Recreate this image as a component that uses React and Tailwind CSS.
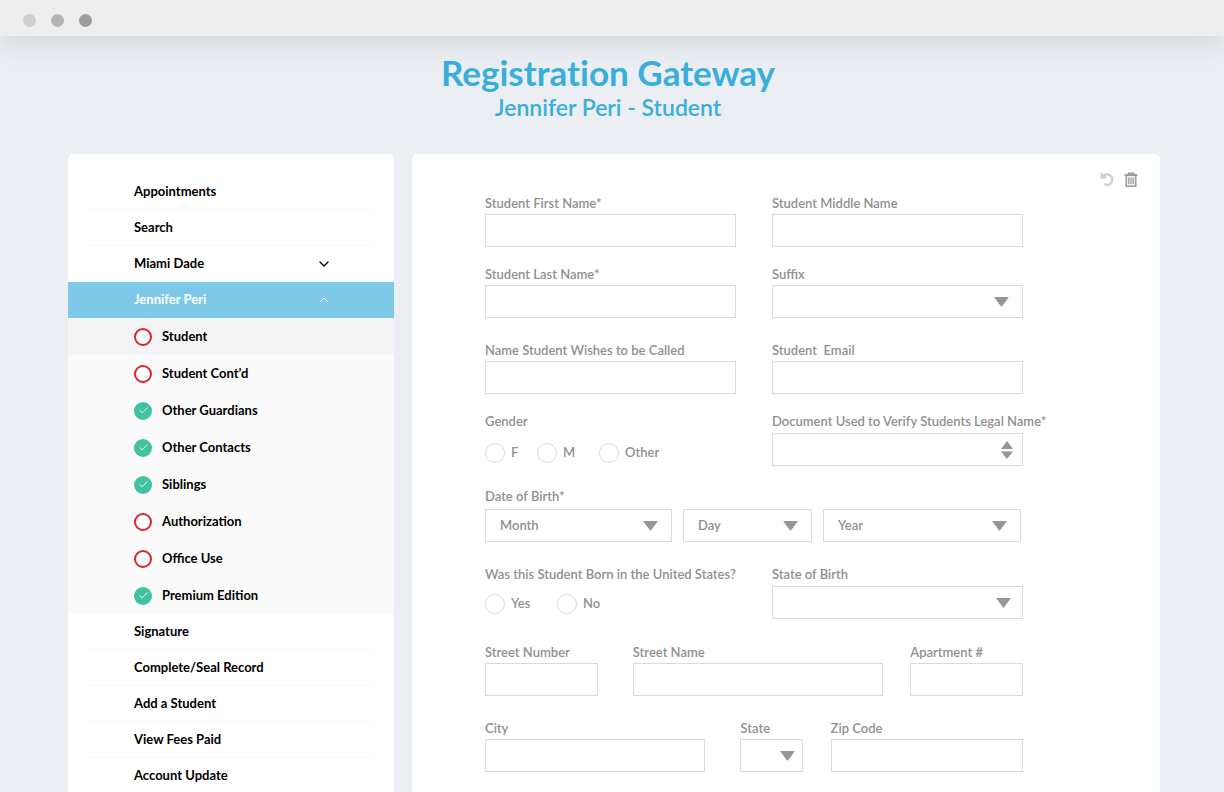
import { Check, ChevronDown, ChevronUp } from "lucide-react";

const TOP_LINKS = ["Appointments", "Search"];

const STUDENT_LINKS = [
  { label: "Student", done: false, current: true },
  { label: "Student Cont’d", done: false },
  { label: "Other Guardians", done: true },
  { label: "Other Contacts", done: true },
  { label: "Siblings", done: true },
  { label: "Authorization", done: false },
  { label: "Office Use", done: false },
  { label: "Premium Edition", done: true },
];

const BOTTOM_LINKS = ["Signature", "Complete/Seal Record", "Add a Student", "View Fees Paid", "Account Update"];

function NavItem({ label }) {
  return (
    <li className="mx-5 border-b border-[#fafafa]">
      <a href="#" className="flex h-[35px] items-center pl-[46px]">
        {label}
      </a>
    </li>
  );
}

function Status({ done }) {
  if (done) {
    return (
      <span className="flex size-[18px] items-center justify-center rounded-full bg-[#41c19e]">
        <Check className="size-[11px] text-white" strokeWidth={2} />
      </span>
    );
  }
  return <span className="size-[18px] rounded-full border-2 border-[#dc2430] bg-white" />;
}

function Sidebar() {
  return (
    <nav className="w-[326px] shrink-0 rounded-t-[5px] bg-white pt-5 text-[13px] font-bold text-black">
      <ul>
        {TOP_LINKS.map((label) => (
          <NavItem key={label} label={label} />
        ))}
        <li>
          <button type="button" className="flex h-9 w-full items-center justify-between pl-[66px] pr-[62px]">
            Miami Dade
            <ChevronDown className="size-4" strokeWidth={2} />
          </button>
        </li>
        <li>
          <button
            type="button"
            className="flex h-9 w-full items-center justify-between bg-[#7dc9e7] pl-[66px] pr-[62px] text-white"
          >
            Jennifer Peri
            <ChevronUp className="size-4" strokeWidth={1.5} />
          </button>
          <ul className="bg-[#fafafa]">
            {STUDENT_LINKS.map(({ label, done, current }) => (
              <li key={label}>
                <a
                  href="#"
                  className={`flex h-[37px] items-center gap-[10px] pl-[66px] ${current ? "bg-[#f4f4f4]" : ""}`}
                >
                  <Status done={done} />
                  {label}
                </a>
              </li>
            ))}
          </ul>
        </li>
        {BOTTOM_LINKS.map((label) => (
          <NavItem key={label} label={label} />
        ))}
      </ul>
    </nav>
  );
}

function Label({ htmlFor, children }) {
  return (
    <label htmlFor={htmlFor} className="block whitespace-nowrap leading-5">
      {children}
    </label>
  );
}

function TextField({ id, label, className = "" }) {
  return (
    <div className={`flex min-w-0 flex-col gap-px ${className}`}>
      <Label htmlFor={id}>{label}</Label>
      <input id={id} type="text" className="h-[33px] w-full border border-[#dadada] bg-white px-3 outline-none" />
    </div>
  );
}

function Select({ id, name, placeholder = "", stepper = false, arrow = "right-[14px]", className = "" }) {
  return (
    <div className={`relative min-w-0 ${className}`}>
      <select
        id={id}
        aria-label={name}
        className="block h-[33px] w-full appearance-none border border-[#dadada] bg-white px-[14px] outline-none"
      >
        <option>{placeholder}</option>
      </select>
      {stepper ? (
        <svg className="pointer-events-none absolute right-[10px] top-2 h-[18px] w-3" viewBox="0 0 12 18" fill="#969696">
          <path d="M6 0l6 8H0zM0 10.500h12L6 18z" />
        </svg>
      ) : (
        <svg
          className={`pointer-events-none absolute top-3 h-[10px] w-[15px] ${arrow}`}
          viewBox="0 0 15 10"
          fill="#969696"
        >
          <path d="M0 0h15L7.500 10z" />
        </svg>
      )}
    </div>
  );
}

function Radio({ name, label, className = "" }) {
  return (
    <label className={`flex items-center gap-[6px] ${className}`}>
      <input
        type="radio"
        name={name}
        className="size-5 shrink-0 appearance-none rounded-full border border-[#dadada] bg-white checked:border-[#3aaedb] checked:bg-[#3aaedb]"
      />
      {label}
    </label>
  );
}

function RegistrationForm() {
  return (
    <form className="min-w-0 flex-1 rounded-t-[5px] bg-white text-[13px] font-semibold text-[#909090]">
      <div className="flex h-[39px] items-end justify-end gap-[9px] pr-[22px]">
        <button type="button" aria-label="Reset" className="mb-[6px]">
          <svg className="h-[15px] w-[15px]" viewBox="0 0 15 15" fill="none" stroke="#cfcfcf" strokeWidth="2.200">
            <path d="M2.500 4.800A5.300 5.300 0 1 1 4 12" />
            <path d="M1.600 1v4.400h4.800" />
          </svg>
        </button>
        <button type="button" aria-label="Delete" className="mb-[6px]">
          <svg className="h-[15px] w-[14px]" viewBox="0 0 14 15" fill="none" stroke="#999">
            <path d="M2.200 3.200h9.600v11H2.200z" fill="#eee" strokeWidth="1.400" />
            <path d="M.5 3.100h13M4.500 3V1.200h5V3" strokeWidth="1.600" />
            <path d="M4.700 5.500v6.500M7 5.500v6.500M9.300 5.500v6.500" strokeWidth="1.200" />
          </svg>
        </button>
      </div>

      <div className="pb-5 pl-[73px] pr-[137px]">
        <div className="grid grid-cols-2 gap-x-9 gap-y-[17px]">
          <TextField id="first" label="Student First Name*" />
          <TextField id="middle" label="Student Middle Name" />
          <TextField id="last" label="Student Last Name*" />
          <div className="flex flex-col gap-px">
            <Label htmlFor="suffix">Suffix</Label>
            <Select id="suffix" />
          </div>
        </div>

        <div className="mt-[22px] grid grid-cols-2 gap-x-9">
          <TextField id="called" label="Name Student Wishes to be Called" />
          <TextField id="email" label={"Student\u00a0 Email"} />
        </div>

        <div className="mt-[17px] grid grid-cols-2 gap-x-9">
          <fieldset>
            <legend className="leading-5">Gender</legend>
            <div className="mt-[3px] flex h-[33px] items-center pt-1">
              <Radio name="gender" label="F" className="w-[52px]" />
              <Radio name="gender" label="M" className="w-[62px]" />
              <Radio name="gender" label="Other" />
            </div>
          </fieldset>
          <div className="flex min-w-0 flex-col gap-[2px]">
            <Label htmlFor="document">Document Used to Verify Students Legal Name*</Label>
            <Select id="document" stepper />
          </div>
        </div>

        <fieldset className="mt-[19px]">
          <legend className="leading-5">Date of Birth*</legend>
          <div className="flex gap-[11px] pr-[2px] pt-[3px]">
            <Select name="Month" placeholder="Month" className="flex-[187]" />
            <Select name="Day" placeholder="Day" className="flex-[129]" />
            <Select name="Year" placeholder="Year" className="flex-[198]" />
          </div>
        </fieldset>

        <div className="mt-[22px] grid grid-cols-2 gap-x-9">
          <fieldset className="min-w-0">
            <legend className="whitespace-nowrap leading-5">Was this Student Born in the United States?</legend>
            <div className="mt-[3px] flex h-[33px] items-center">
              <Radio name="born" label="Yes" className="w-[72px]" />
              <Radio name="born" label="No" />
            </div>
          </fieldset>
          <div className="flex min-w-0 flex-col gap-[2px]">
            <Label htmlFor="birth-state">State of Birth</Label>
            <Select id="birth-state" arrow="right-3" />
          </div>
        </div>

        <div className="mt-[22px] flex">
          <TextField id="street-number" label="Street Number" className="mr-[35px] flex-[113]" />
          <TextField id="street-name" label="Street Name" className="mr-[27px] flex-[251]" />
          <TextField id="apartment" label="Apartment #" className="flex-[113]" />
        </div>

        <div className="mt-[22px] flex">
          <TextField id="city" label="City" className="mr-[35px] flex-[220]" />
          <div className="mr-7 flex min-w-0 flex-[62] flex-col gap-px">
            <Label htmlFor="state">State</Label>
            <Select id="state" arrow="right-2" />
          </div>
          <TextField id="zip" label="Zip Code" className="flex-[192]" />
        </div>
      </div>
    </form>
  );
}

export default function App() {
  return (
    <div className="flex min-h-screen flex-col bg-[#ebeff4] font-['Lato',sans-serif]">
      <div className="flex h-9 items-center gap-[15px] bg-[#eeeeee] pl-[23px] pt-1 shadow-[0_8px_24px_rgba(100,105,100,0.18)]">
        <span className="size-[13px] rounded-full bg-[#cfcfcf]" />
        <span className="size-[13px] rounded-full bg-[#b5b5b5]" />
        <span className="size-[13px] rounded-full bg-[#9d9d9d]" />
      </div>

      <header className="pb-[34px] pr-2 pt-[14px] text-center text-[#3aaedb] [font-variant-ligatures:none]">
        <h1 className="text-[35px] font-bold leading-[44px]">Registration Gateway</h1>
        <p className="text-[23px] font-semibold leading-[26px]">Jennifer Peri - Student</p>
      </header>

      <main className="flex flex-1 gap-[18px] pl-[68px] pr-16">
        <Sidebar />
        <RegistrationForm />
      </main>
    </div>
  );
}
